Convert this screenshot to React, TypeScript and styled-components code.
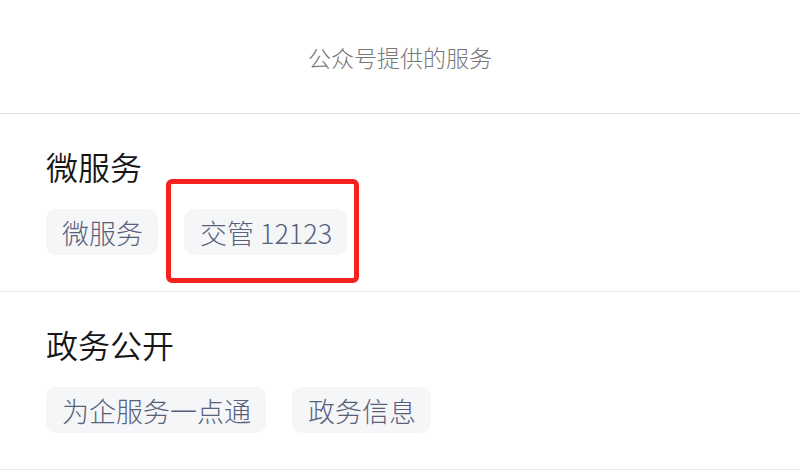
import * as React from 'react'
import styled, { createGlobalStyle } from 'styled-components'

const GlobalStyle = createGlobalStyle`
  html, body {
    margin: 0;
    padding: 0;
    background: #ffffff;
  }
  body {
    font-family: 'Noto Sans CJK SC', 'Noto Sans', sans-serif;
  }
`

const SPage = styled.div`
  width: 800px;
  height: 471px;
  overflow: hidden;
  background: #ffffff;
`

const SHeader = styled.div`
  height: 113px;
  display: flex;
  align-items: center;
  justify-content: center;
  border-bottom: 1px solid #e2e2e2;
  font-size: 23px;
  font-weight: 300;
  color: #777777;
`

const SSection = styled.div`
  display: flex;
  flex-direction: column;
  gap: 23px;
  padding: 32px 46px 36px;
  border-bottom: 1px solid #e8e8e8;
`

const STitle = styled.div`
  font-size: 32px;
  line-height: 40px;
  font-weight: 350;
  color: #161616;
`

const SChips = styled.div`
  display: flex;
  gap: 26px;
`

interface IChipStyle {
  highlighted?: boolean
}

const SChip = styled.div<IChipStyle>`
  position: relative;
  height: 46px;
  display: flex;
  align-items: center;
  padding: 0 15px 0 16px;
  border-radius: 10px;
  background: #f5f6f8;
  color: #58617c;
  font-size: 27px;
  font-weight: 300;

  &::after {
    content: '';
    display: ${({ highlighted }) => (highlighted ? 'block' : 'none')};
    position: absolute;
    left: -18px;
    right: -12px;
    top: -30px;
    bottom: -28px;
    border: 5px solid #f5211f;
    border-radius: 6px;
    pointer-events: none;
  }
`

interface IService {
  name: string
  highlighted?: boolean
}

interface IGroup {
  title: string
  services: IService[]
}

const groups: IGroup[] = [
  {
    title: '微服务',
    services: [{ name: '微服务' }, { name: '交管 12123', highlighted: true }],
  },
  {
    title: '政务公开',
    services: [{ name: '为企服务一点通' }, { name: '政务信息' }],
  },
]

const App = () => {
  return (
    <>
      <GlobalStyle />
      <SPage>
        <SHeader>公众号提供的服务</SHeader>
        {groups.map((g) => (
          <SSection key={g.title}>
            <STitle>{g.title}</STitle>
            <SChips>
              {g.services.map((s) => (
                <SChip key={s.name} highlighted={s.highlighted}>
                  {s.name}
                </SChip>
              ))}
            </SChips>
          </SSection>
        ))}
      </SPage>
    </>
  )
}

export default App
